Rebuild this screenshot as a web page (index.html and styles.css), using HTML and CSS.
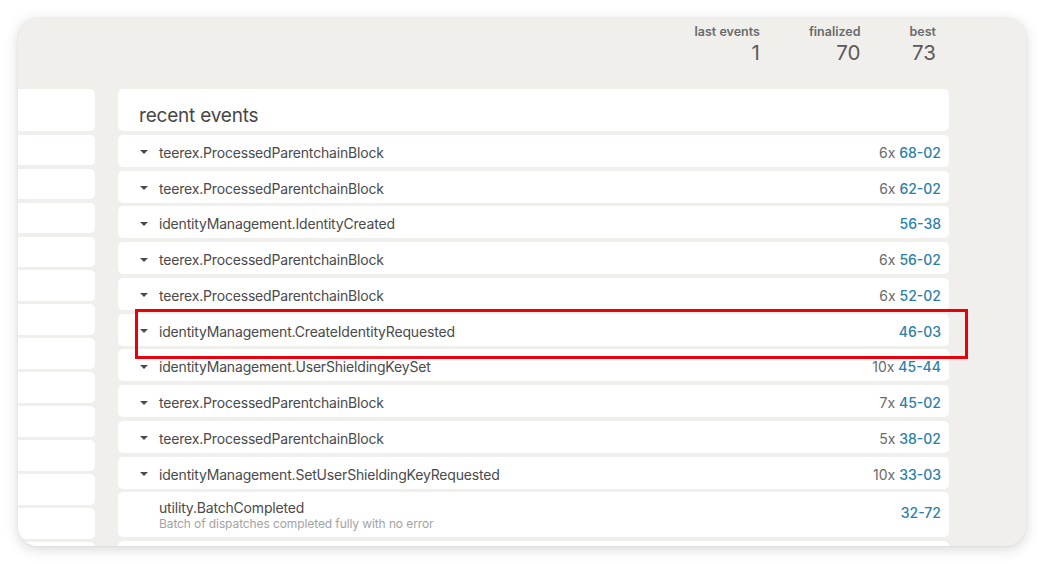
FILE: index.html
```html
<!DOCTYPE html>
<html>
<head>
<meta charset="utf-8">
<link rel="stylesheet" href="styles.css">
</head>
<body>
<div class="window">
  <div class="header">
    <div class="stat"><div class="label">last events</div><div class="value">1</div></div>
    <div class="stat"><div class="label">finalized</div><div class="value">70</div></div>
    <div class="stat"><div class="label">best</div><div class="value">73</div></div>
  </div>
  <div class="content">
    <div class="left">
      <div class="lcard first"></div>
      <div class="lcard"></div><div class="lcard"></div><div class="lcard"></div>
      <div class="lcard"></div><div class="lcard"></div><div class="lcard"></div>
      <div class="lcard"></div><div class="lcard"></div><div class="lcard"></div>
      <div class="lcard"></div><div class="lcard"></div><div class="lcard"></div>
      <div class="lcard"></div>
    </div>
    <div class="main">
      <div class="title">recent events</div>
      <div class="row"><span class="caret"></span><span class="name">teerex.ProcessedParentchainBlock</span><span class="meta"><span class="count">6x</span> <span class="link">68-02</span></span></div>
      <div class="row"><span class="caret"></span><span class="name">teerex.ProcessedParentchainBlock</span><span class="meta"><span class="count">6x</span> <span class="link">62-02</span></span></div>
      <div class="row"><span class="caret"></span><span class="name">identityManagement.IdentityCreated</span><span class="meta"><span class="link">56-38</span></span></div>
      <div class="row"><span class="caret"></span><span class="name">teerex.ProcessedParentchainBlock</span><span class="meta"><span class="count">6x</span> <span class="link">56-02</span></span></div>
      <div class="row"><span class="caret"></span><span class="name">teerex.ProcessedParentchainBlock</span><span class="meta"><span class="count">6x</span> <span class="link">52-02</span></span></div>
      <div class="row"><span class="caret"></span><span class="name">identityManagement.CreateIdentityRequested</span><span class="meta"><span class="link">46-03</span></span></div>
      <div class="row"><span class="caret"></span><span class="name">identityManagement.UserShieldingKeySet</span><span class="meta"><span class="count">10x</span> <span class="link">45-44</span></span></div>
      <div class="row"><span class="caret"></span><span class="name">teerex.ProcessedParentchainBlock</span><span class="meta"><span class="count">7x</span> <span class="link">45-02</span></span></div>
      <div class="row"><span class="caret"></span><span class="name">teerex.ProcessedParentchainBlock</span><span class="meta"><span class="count">5x</span> <span class="link">38-02</span></span></div>
      <div class="row"><span class="caret"></span><span class="name">identityManagement.SetUserShieldingKeyRequested</span><span class="meta"><span class="count">10x</span> <span class="link">33-03</span></span></div>
      <div class="row tall"><span class="nocaret"></span><span class="name"><span class="ev">utility.BatchCompleted</span><span class="desc">Batch of dispatches completed fully with no error</span></span><span class="meta"><span class="link">32-72</span></span></div>
      <div class="row"></div>
    </div>
  </div>
</div>
<div class="highlight"></div>
</body>
</html>
```

FILE: styles.css
```css
html, body {
  margin: 0;
  padding: 0;
  background: #ffffff;
}
body {
  width: 1045px;
  height: 564px;
  position: relative;
  font-family: Inter, "Noto Sans", "Liberation Sans", sans-serif;
  overflow: hidden;
}
.window {
  margin: 18px 0 0 18px;
  width: 1008px;
  height: 528px;
  border-radius: 20px;
  background: #f0efec;
  box-shadow: 0 3px 14px rgba(0, 0, 0, 0.16), 0 0 2px rgba(0, 0, 0, 0.08);
  overflow: hidden;
}
.header {
  height: 71px;
  display: flex;
  justify-content: flex-end;
  align-items: flex-start;
  padding-right: 90px;
  box-sizing: border-box;
  padding-top: 6px;
  gap: 49px;
}
.stat {
  text-align: right;
}
.stat .label {
  font-size: 12.5px;
  font-weight: 600;
  color: #6a6a6a;
  line-height: 15px;
}
.stat .value {
  font-size: 20.5px;
  font-weight: 400;
  color: #5a5a5a;
  line-height: 24px;
  margin-top: 2px;
}
.content {
  display: flex;
  gap: 23px;
  align-items: flex-start;
}
.left {
  width: 300px;
  margin-left: -223px;
  display: flex;
  flex-direction: column;
  gap: 3.35px;
}
.lcard {
  background: #ffffff;
  height: 30.6px;
  border-radius: 5px;
}
.lcard.first {
  height: 42.4px;
}
.main {
  width: 831px;
  display: flex;
  flex-direction: column;
  gap: 3.75px;
}
.title {
  background: #ffffff;
  border-radius: 5px;
  height: 42px;
  box-sizing: border-box;
  padding-left: 21px;
  padding-top: 16px;
  font-size: 19px;
  line-height: 22px;
  color: #474747;
  letter-spacing: -0.2px;
}
.row {
  background: #ffffff;
  border-radius: 5px;
  height: 32px;
  flex-shrink: 0;
  display: flex;
  align-items: center;
  padding: 3px 8px 0 22px;
  box-sizing: border-box;
  font-size: 14px;
  color: #4a4a4a;
}
.row.tall {
  height: 45px;
  padding-top: 1px;
}
.row.tall .meta {
  margin-bottom: 6px;
}
.caret {
  width: 0;
  height: 0;
  border-left: 4px solid transparent;
  border-right: 4px solid transparent;
  border-top: 4.5px solid #4a4a4a;
  margin-right: 11px;
  flex-shrink: 0;
}
.nocaret {
  width: 8px;
  margin-right: 11px;
  flex-shrink: 0;
}
.name {
  flex: 1;
  display: flex;
  flex-direction: column;
  letter-spacing: -0.18px;
}
.ev {
  line-height: 17px;
}
.desc {
  font-size: 12px;
  color: #a3a3a3;
  line-height: 15px;
  letter-spacing: -0.1px;
}
.meta {
  white-space: nowrap;
}
.count {
  color: #6a6a6a;
}
.link {
  color: #2b80aa;
  font-weight: 500;
}
.highlight {
  position: absolute;
  left: 135px;
  top: 309px;
  width: 833px;
  height: 50px;
  box-sizing: border-box;
  border: 3px solid #e8000b;
}
```
